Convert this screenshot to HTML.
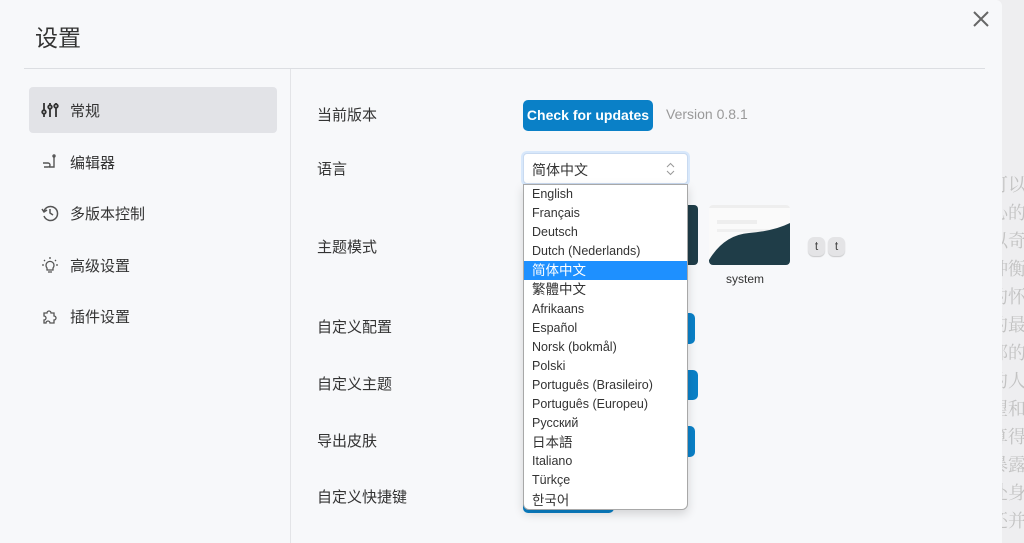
<!DOCTYPE html>
<html><head><meta charset="utf-8"><style>
*{margin:0;padding:0;box-sizing:border-box}
body{width:1024px;height:543px;overflow:hidden;background:#eeeef0;font-family:"Liberation Sans","Noto Sans CJK SC",sans-serif;position:relative}
.bgtext{position:absolute;left:990px;top:170px;width:100px;font-family:"Noto Serif CJK SC",serif;font-size:18px;line-height:28px;color:#c2c2c2;white-space:nowrap}
.modal{position:absolute;left:0;top:0;width:1002px;height:543px;background:#f7f8fa;border-radius:0 6px 0 0}
.title{position:absolute;left:35px;top:19px;font-size:23px;color:#333}
.close{position:absolute;left:972px;top:10px}
.hr{position:absolute;left:24px;top:68px;width:961px;height:1px;background:#dcdee2}
.vr{position:absolute;left:290px;top:69px;width:1px;height:474px;background:#e3e4e7}
.nav{position:absolute;left:29px;width:248px;height:46px;border-radius:4px;font-size:15px;color:#333;display:flex;align-items:center}
.nav svg{position:absolute;left:12px}
.nav span{position:absolute;left:41px}
.act{background:#e2e3e7}
.lbl{position:absolute;left:317px;font-size:15px;color:#333}
.btn{position:absolute;background:#0a80c7;border-radius:5px}
.chk{left:523px;top:100px;width:130px;height:31px;color:#fff;font-size:14px;font-weight:bold;text-align:center;line-height:31px}
.ver{position:absolute;left:666px;top:106px;font-size:14px;color:#999}
.sel{position:absolute;left:523px;top:153px;width:165px;height:31px;background:#fff;border:1px solid #c9daf0;box-shadow:0 0 0 2px #d8e8fb;border-radius:4px;font-size:14px;color:#333;padding:6px 8px}
.dd{position:absolute;left:523px;top:184px;width:165px;height:326px;background:#fff;border:1px solid #a8a8a8;border-radius:0 0 6px 6px;box-shadow:0 4px 10px rgba(0,0,0,.15);font-size:12.5px;color:#333;padding-top:0}
.dd div{height:19.1px;line-height:19px;padding-left:8px;white-space:nowrap}
.dd .hl{background:#1e90ff;color:#fff;font-size:13.5px}
.dd .cj{font-size:13.5px}
.thumb{position:absolute;top:205px;height:60px;border-radius:4px;overflow:hidden}
.tb{position:absolute;top:237px;width:17px;height:19px;background:#e4e4e6;border-radius:6px;font-size:12px;color:#444;text-align:center;line-height:18px;box-shadow:0 1px 1px rgba(0,0,0,.2)}
</style></head><body>
<div class="bgtext">可以<br>心的<br>以奇<br>种衡<br>的怀<br>的最<br>部的<br>的人<br>望和<br>算得<br>暴露<br>处身<br>还并</div>
<div class="modal">
<div class="title">设置</div>
<svg class="close" width="18" height="18" viewBox="0 0 18 18"><path d="M2 2L16 16M16 2L2 16" stroke="#666" stroke-width="2"/></svg>
<div class="hr"></div><div class="vr"></div>
<div class="nav act" style="top:87px"><svg width="18" height="18" viewBox="0 0 18 18" fill="none" stroke="#333" stroke-width="1.8"><path d="M3 2v14M9 2v14M15 2v14"/><circle cx="3" cy="11" r="1.8" fill="#e2e3e7"/><circle cx="9" cy="6" r="1.8" fill="#e2e3e7"/><circle cx="15" cy="5" r="1.8" fill="#e2e3e7"/></svg><span>常规</span></div>
<div class="nav" style="top:139px"><svg width="18" height="18" viewBox="0 0 18 18" fill="none" stroke="#555" stroke-width="1.4"><path d="M2 10h5a2 2 0 0 1 0 4H3M13 3v11h-5"/><circle cx="13" cy="3" r="1"/></svg><span>编辑器</span></div>
<div class="nav" style="top:190px"><svg width="18" height="18" viewBox="0 0 18 18" fill="none" stroke="#555" stroke-width="1.5"><path d="M3 7a7 7 0 1 1 0 5M1 5l2 3 3-2M9 5v4l3 2"/></svg><span>多版本控制</span></div>
<div class="nav" style="top:242px"><svg width="18" height="18" viewBox="0 0 18 18" fill="none" stroke="#555" stroke-width="1.3"><path d="M6 12a4 4 0 1 1 6 0v2H6zM7 16h4M9 1v2M3 4l1 1M15 4l-1 1M1 9h2M15 9h2"/></svg><span>高级设置</span></div>
<div class="nav" style="top:293px"><svg width="18" height="18" viewBox="0 0 18 18" fill="none" stroke="#555" stroke-width="1.3"><path d="M3 6h3a2 2 0 1 1 4 0h3v3a2 2 0 1 1 0 4v3H9a2 2 0 1 0-4 0H3v-3a2 2 0 1 0 0-4z"/></svg><span>插件设置</span></div>

<div class="lbl" style="top:104px">当前版本</div>
<div class="lbl" style="top:158px">语言</div>
<div class="lbl" style="top:236px">主题模式</div>
<div class="lbl" style="top:316px">自定义配置</div>
<div class="lbl" style="top:373px">自定义主题</div>
<div class="lbl" style="top:430px">导出皮肤</div>
<div class="lbl" style="top:486px">自定义快捷键</div>

<div class="btn chk">Check for updates</div>
<div class="ver">Version 0.8.1</div>

<div class="thumb" style="left:600px;width:98px;background:#1f3d48"></div>
<div class="thumb" style="left:709px;width:81px;background:#fafafa"><svg width="81" height="60"><rect x="0" y="0" width="81" height="3" fill="#eee"/><rect x="8" y="15" width="40" height="4" fill="#eee"/><rect x="8" y="24" width="60" height="3" fill="#f0f0f0"/><path d="M0 60V55Q15 30 40 28T81 18V60Z" fill="#1f3d48"/></svg></div>
<div style="position:absolute;left:726px;top:272px;font-size:12px;color:#333">system</div>
<div class="tb" style="left:808px">t</div><div class="tb" style="left:828px">t</div>

<div class="btn" style="left:600px;top:313px;width:95px;height:31px"></div>
<div class="btn" style="left:600px;top:370px;width:98px;height:30px"></div>
<div class="btn" style="left:600px;top:426px;width:95px;height:31px"></div>
<div class="btn" style="left:523px;top:480px;width:91px;height:33px"></div>

<div class="sel">简体中文<svg style="position:absolute;right:12px;top:8px" width="9" height="14" viewBox="0 0 9 14" fill="none" stroke="#999" stroke-width="1"><path d="M1 5l3.5-3.5L8 5M1 9l3.5 3.5L8 9"/></svg></div>
<div class="dd">
<div>English</div><div>Français</div><div>Deutsch</div><div>Dutch (Nederlands)</div>
<div class="hl">简体中文</div><div class="cj">繁體中文</div><div>Afrikaans</div><div>Español</div>
<div>Norsk (bokmål)</div><div>Polski</div><div>Português (Brasileiro)</div><div>Português (Europeu)</div>
<div>Русский</div><div class="cj">日本語</div><div>Italiano</div><div>Türkçe</div><div class="cj">한국어</div>
</div>
</div>
</body></html>
